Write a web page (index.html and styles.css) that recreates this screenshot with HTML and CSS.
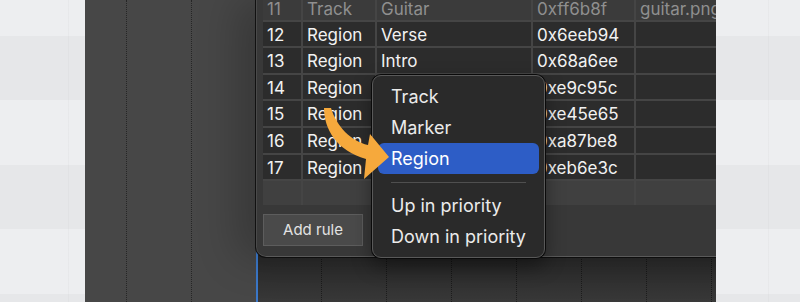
FILE: index.html
```html
<!DOCTYPE html>
<html>
<head>
<meta charset="utf-8">
<link rel="stylesheet" href="styles.css">
</head>
<body>
<div class="page">
  <div class="side side-left"></div>
  <div class="shot">
    <div class="lines">
      <span class="col first"></span><span class="col"></span><span class="col"></span><span class="col"></span><span class="col"></span><span class="col"></span><span class="col"></span><span class="col"></span><span class="col"></span><span class="col"></span><span class="col"></span>
    </div>
    <div class="app">
      <div class="window">
        <div class="table">
          <div class="row dim"><span class="c">11</span><span class="c">Track</span><span class="c">Guitar</span><span class="c">0xff6b8f</span><span class="c">guitar.png</span></div>
          <div class="row"><span class="c">12</span><span class="c">Region</span><span class="c">Verse</span><span class="c">0x6eeb94</span><span class="c"></span></div>
          <div class="row"><span class="c">13</span><span class="c">Region</span><span class="c">Intro</span><span class="c">0x68a6ee</span><span class="c"></span></div>
          <div class="row"><span class="c">14</span><span class="c">Region</span><span class="c"></span><span class="c">0xe9c95c</span><span class="c"></span></div>
          <div class="row"><span class="c">15</span><span class="c">Region</span><span class="c"></span><span class="c">0xe45e65</span><span class="c"></span></div>
          <div class="row"><span class="c">16</span><span class="c">Region</span><span class="c"></span><span class="c">0xa87be8</span><span class="c"></span></div>
          <div class="row"><span class="c">17</span><span class="c">Region</span><span class="c"></span><span class="c">0xeb6e3c</span><span class="c"></span></div>
          <div class="row empty"><span class="c"></span><span class="c"></span><span class="c"></span><span class="c"></span><span class="c"></span></div>
        </div>
        <div class="footer"><button class="btn">Add rule</button></div>
      </div>
      <div class="under"></div>
    </div>
    <div class="menu">
      <div class="item">Track</div>
      <div class="item">Marker</div>
      <div class="item active">Region</div>
      <div class="sep"></div>
      <div class="item">Up in priority</div>
      <div class="item">Down in priority</div>
    </div>
    <svg class="arrow" viewBox="85 0 631 302" width="631" height="302">
      <path d="M 324 108 C 324 129, 337 151, 366 159 L 364 179 L 389 157 L 370 134 L 368 145 C 351 141, 337 127, 331 108 Z" fill="#f6a93c"/>
    </svg>
  </div>
  <div class="side side-right"></div>
</div>
</body>
</html>
```

FILE: styles.css
```css
* { box-sizing: border-box; }
html, body { margin: 0; padding: 0; }
body {
  width: 800px;
  height: 302px;
  overflow: hidden;
  font-family: Inter, "Noto Sans", "Liberation Sans", sans-serif;
}
.page {
  display: grid;
  grid-template-columns: 85px 631px 84px;
  height: 302px;
  background: linear-gradient(to bottom,
    #edeef0 0 36px, #e6e7e9 36px 100.5px,
    #edeef0 100.5px 165px, #e6e7e9 165px 229.5px,
    #edeef0 229.5px 294px, #e6e7e9 294px 302px);
}
.side-left {
  background: linear-gradient(to right, transparent 68px, rgba(0,0,0,0.025) 68px 69px, transparent 69px);
}
.side-right {
  background: linear-gradient(to right, transparent 52px, rgba(0,0,0,0.025) 52px 53px, transparent 53px);
}
.shot {
  position: relative;
  overflow: hidden;
  display: grid;
  background: #474747;
}
.lines, .app { grid-area: 1 / 1; }
.lines { display: flex; height: 302px; }
.col {
  flex: 0 0 65px;
  border-right: 1px dotted #262626;
}
.col.first { flex-basis: 42px; }

.app {
  display: flex;
  flex-direction: column;
  padding-left: 170px;
  height: 302px;
}
.window {
  position: relative;
  z-index: 1;
  height: 258px;
  background: #383838;
  border-left: 1px solid #111;
  border-bottom: 1px solid #0e0e0e;
  border-bottom-left-radius: 11px;
  box-shadow: inset 1px 0 0 #4a4a4a, inset 0 -1px 0 #5a5a5a, -18px 0 40px rgba(0,0,0,0.22);
  padding-left: 7px;
  overflow: hidden;
}
.table {
  margin-top: -5.17px;
  width: 520px;
}
.row {
  display: grid;
  grid-template-columns: 40px 74px 156px 103px 1fr;
  height: 26.67px;
  background: #2c2c2c;
  border-bottom: 2px solid #454545;
  color: #f2f2f2;
  font-size: 17px;
}
.row.dim { background: #3b3b3b; color: #8f8f8f; }
.row.empty { background: #404040; height: 23.5px; border-bottom: 0; }
.c {
  border-right: 2px solid #454545;
  padding-left: 4px;
  line-height: 27px;
  white-space: nowrap;
  overflow: hidden;
}
.row.dim .c {
  padding-top: 5.17px;
  line-height: 19px;
}
.footer { padding-top: 9px; }
.btn {
  display: block;
  width: 100px;
  height: 32px;
  background: #4a4a4a;
  border: 1px solid #5d5d5d;
  color: #e2e2e2;
  font-family: inherit;
  font-size: 15px;
  padding: 0;
}
.under {
  flex: 1;
  margin-top: -12px;
  margin-left: 1px;
  border-left: 2px solid #3b78c9;
  background: linear-gradient(to bottom, rgba(0,0,0,0.5), rgba(0,0,0,0.2));
}
.menu {
  position: absolute;
  left: 287px;
  top: 75px;
  width: 173px;
  height: 183px;
  border: 1px solid #595959;
  border-radius: 9px;
  background: #2a2a2a;
  box-shadow: 0 0 0 1px #0a0a0a, 0 8px 20px rgba(0,0,0,0.4);
  padding: 5px;
  z-index: 2;
}
.item {
  height: 31px;
  line-height: 31px;
  padding-left: 13px;
  font-size: 18px;
  color: #ebebeb;
  border-radius: 6px;
  white-space: nowrap;
}
.item.active { background: #2d5dc6; color: #fff; }
.sep {
  height: 1px;
  background: #4f4f4f;
  margin: 7.5px 13px;
}
.arrow {
  position: absolute;
  left: 0;
  top: 0;
  z-index: 3;
}
```
